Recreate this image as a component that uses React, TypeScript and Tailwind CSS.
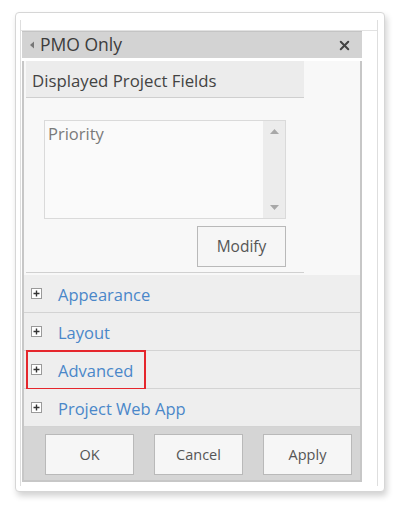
import { X } from "lucide-react";

const sections = ["Appearance", "Layout", "Advanced", "Project Web App"];

function PlusBox() {
  return (
    <span className="flex h-[11px] w-[11px] items-center justify-center border border-[#9a9a9a] bg-white">
      <svg width="7" height="7" viewBox="0 0 7 7">
        <path d="M3.5 0.5v6M0.5 3.5h6" stroke="#333" strokeWidth="1.4" />
      </svg>
    </span>
  );
}

function Btn({ label, className = "" }: { label: string; className?: string }) {
  return (
    <button
      className={`flex h-[41px] w-[89px] items-center justify-center border border-[#b9b9b9] bg-[#f6f6f6] text-[14.5px] text-[#555] ${className}`}
    >
      {label}
    </button>
  );
}

export default function App() {
  return (
    <div
      className="h-[508px] w-[400px] bg-white px-[15px] pt-[12px]"
      style={{ fontFamily: '"Open Sans", "Noto Sans", sans-serif' }}
    >
      <div className="h-[480px] rounded-[4px] border border-[#d6d6d6] bg-white pt-[7px] shadow-[2px_4px_6px_rgba(0,0,0,0.18)]">
        <div className="ml-[4px] mr-[6px] h-[466px] border-x border-[#dedede]">
          <div className="h-[11px] border-b border-[#e2e2e2]" />
          <div className="ml-[1px] w-[340px]">
            {/* title bar */}
            <div className="flex h-[27px] items-center border-t border-[#c4c4c4] bg-[#d3d3d3] pl-[7px] pr-[10px] text-[#3c3c3c]">
              <svg width="6" height="8" viewBox="0 0 6 8" className="mr-[5px]">
                <path d="M5 0.5L1 4l4 3.5z" fill="#777" />
              </svg>
              <span className="text-[17.5px] leading-none">PMO Only</span>
              <X className="ml-auto" size={15} strokeWidth={3.2} color="#444" />
            </div>

            <div className="border-x-2 border-b-2 border-[#c7c7c7] bg-[#f8f8f8]">
              {/* displayed fields */}
              <div className="ml-[2px] mt-[3px] flex h-[37px] w-[278px] items-center border-b border-[#cfcfcf] bg-[#ececec] pl-[6px] pt-[3px] text-[16.8px] text-[#434343]">
                Displayed Project Fields
              </div>

              <div className="ml-[20px] mt-[22px] flex h-[99px] w-[242px] border border-[#dadada] bg-[#fafafa]">
                <div className="flex-1 pl-[3px] pt-[2px] text-[16.5px] leading-[22px] text-[#7a7a7a]">Priority</div>
                <div className="flex w-[22px] flex-col items-center justify-between bg-[#ececec] py-[8px]">
                  <svg width="9" height="5" viewBox="0 0 9 5">
                    <path d="M0 5L4.5 0 9 5z" fill="#a8a8a8" />
                  </svg>
                  <svg width="9" height="5" viewBox="0 0 9 5">
                    <path d="M0 0L4.5 5 9 0z" fill="#a8a8a8" />
                  </svg>
                </div>
              </div>

              <div className="ml-[173px] mt-[7px]">
                <Btn label="Modify" className="text-[15.5px]" />
              </div>

              <div className="ml-[2px] mt-[5px] w-[278px] border-t border-[#d0d0d0]" />

              {/* collapsible groups */}
              <div className="mt-[2px]">
                {sections.map((s) => (
                  <div
                    key={s}
                    className="relative flex h-[38px] items-center border-b border-[#d3d3d3] bg-[#eeeeee] pl-[7px] text-[16.5px] text-[#4a87c9]"
                  >
                    <PlusBox />
                    <span className="ml-[16px] pt-[3px]">{s}</span>
                    {s === "Advanced" && (
                      <span className="absolute left-[2px] top-[-1px] h-[40px] w-[120px] border-2 border-[#e5262c]" />
                    )}
                  </div>
                ))}
              </div>

              {/* footer buttons */}
              <div className="flex h-[53px] gap-[20px] bg-[#d5d5d5] pl-[21px] pt-[7px]">
                <Btn label="OK" />
                <Btn label="Cancel" />
                <Btn label="Apply" />
              </div>
            </div>
          </div>
        </div>
      </div>
    </div>
  );
}
